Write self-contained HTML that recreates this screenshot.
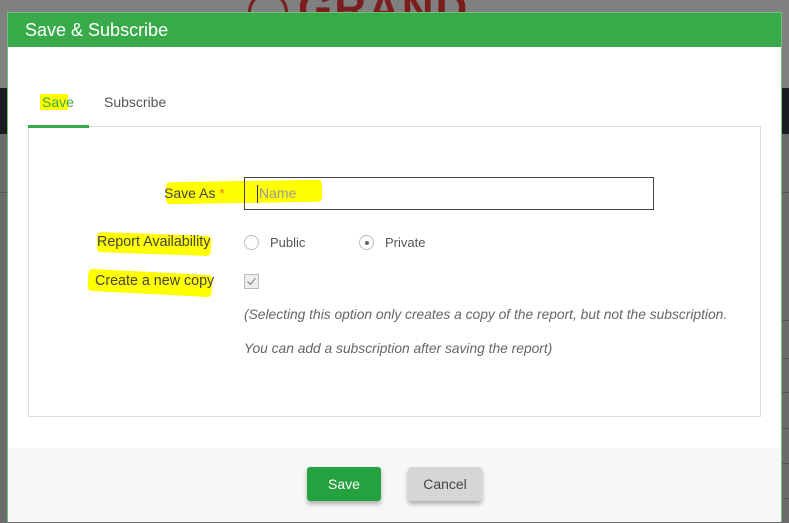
<!DOCTYPE html>
<html><head><style>
*{margin:0;padding:0;box-sizing:border-box}
body{width:789px;height:523px;overflow:hidden;background:#6b6b6b;font-family:"Liberation Sans",sans-serif;position:relative}
.a{position:absolute}
.hl{position:absolute;background:#ffff00;border-radius:4px}
</style></head><body>
<div class="a" style="left:0;top:0;width:789px;height:88px;background:#808080"></div>
<div class="a" style="left:0;top:88px;width:789px;height:46px;background:#1b1e21"></div>
<div class="a" style="left:248px;top:-8px;width:40px;height:40px;border:3px solid #7a1d1d;border-radius:50%"></div>
<div class="a" style="left:298px;top:-16px;font-size:44px;font-weight:bold;color:#7a1d1d;letter-spacing:2px">GRAND</div>
<div class="a" style="left:0;top:192px;width:8px;height:1px;background:#555"></div>
<div class="a" style="left:782px;top:192px;width:7px;height:1px;background:#555"></div>
<div class="a" style="left:782px;top:320px;width:7px;height:1px;background:#555"></div>
<div class="a" style="left:782px;top:358px;width:7px;height:1px;background:#555"></div>
<div class="a" style="left:782px;top:392px;width:7px;height:1px;background:#555"></div>
<div class="a" style="left:782px;top:428px;width:7px;height:1px;background:#555"></div>
<div class="a" style="left:782px;top:463px;width:7px;height:1px;background:#555"></div>
<div class="a" style="left:782px;top:498px;width:7px;height:1px;background:#555"></div>

<div class="a" style="left:7px;top:12px;width:775px;height:510px;background:#fff;border:1px solid #6fc17a">
  <div class="a" style="left:0;top:0;width:773px;height:34px;background:#38aa4a;color:#fff;font-size:18px;padding:7px 0 0 17px">Save &amp; Subscribe</div>
  <div class="a" style="left:0;top:435px;width:773px;height:74px;background:#f7f7f7"></div>
</div>
<div class="hl" style="left:40px;top:94px;width:28px;height:16px;border-radius:0"></div>
<div class="a" style="left:42px;top:94px;font-size:14px;color:#3aa64a">Save</div>
<div class="a" style="left:104px;top:94px;font-size:14px;color:#555">Subscribe</div>
<div class="a" style="left:28px;top:126px;width:733px;height:291px;border:1px solid #ddd"></div>
<div class="a" style="left:28px;top:125px;width:61px;height:3px;background:#38aa4a"></div>

<div class="hl" style="left:166px;top:181px;width:156px;height:22px;transform:rotate(-1deg)"></div>
<div class="hl" style="left:97px;top:234px;width:114px;height:20px;transform:rotate(2deg)"></div>
<div class="hl" style="left:88px;top:272px;width:124px;height:22px;transform:rotate(3deg)"></div>
<div class="a" style="left:164px;top:185px;font-size:14px;color:#444">Save As <span style="color:#f07a2a">*</span></div>
<div class="a" style="left:244px;top:177px;width:410px;height:33px;border:1px solid #444;background:transparent"></div>
<div class="a" style="left:257px;top:185px;width:1px;height:18px;background:#333"></div>
<div class="a" style="left:259px;top:185px;font-size:14px;color:#999">Name</div>
<div class="a" style="left:97px;top:234px;font-size:14.3px;color:#444">Report Availability</div>
<div class="a" style="left:95px;top:273px;font-size:14.3px;color:#444">Create a new copy</div>
<div class="a" style="left:244px;top:235px;width:15px;height:15px;border:1px solid #bbb;border-radius:50%"></div>
<div class="a" style="left:270px;top:235px;font-size:13px;color:#555">Public</div>
<div class="a" style="left:359px;top:235px;width:15px;height:15px;border:1px solid #bbb;border-radius:50%"></div>
<div class="a" style="left:365px;top:241px;width:4px;height:4px;background:#666;border-radius:50%"></div>
<div class="a" style="left:385px;top:235px;font-size:13px;color:#555">Private</div>
<div class="a" style="left:244px;top:274px;width:15px;height:15px;border:1px solid #bbb;background:#eee"></div>
<svg class="a" style="left:244px;top:274px" width="15" height="15"><path d="M3.5 7.5 L6.5 10.5 L11.5 4" fill="none" stroke="#777" stroke-width="1"/></svg>
<div class="a" style="left:244px;top:307px;font-size:13.8px;color:#666;font-style:italic">(Selecting this option only creates a copy of the report, but not the subscription.</div>
<div class="a" style="left:244px;top:341px;font-size:13.8px;color:#666;font-style:italic">You can add a subscription after saving the report)</div>

<div class="a" style="left:307px;top:467px;width:74px;height:34px;background:#26a13f;border-radius:3px;box-shadow:0 3px 5px rgba(0,0,0,.3);color:#fff;font-size:14px;text-align:center;line-height:34px">Save</div>
<div class="a" style="left:408px;top:467px;width:74px;height:34px;background:#d6d6d6;border-radius:3px;box-shadow:0 3px 5px rgba(0,0,0,.3);color:#444;font-size:14px;text-align:center;line-height:34px">Cancel</div>
</body></html>
